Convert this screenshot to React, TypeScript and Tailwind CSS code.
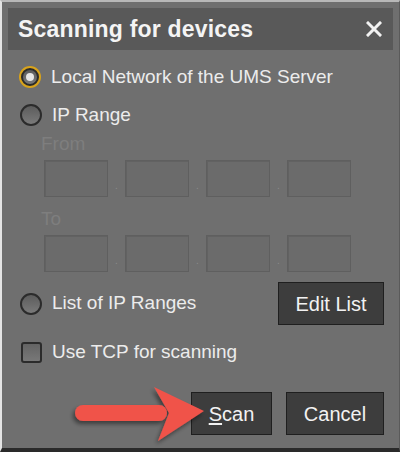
import React from 'react';

function Radio({ checked }: { checked?: boolean }) {
  return (
    <span
      className={`flex h-[22px] w-[22px] shrink-0 items-center justify-center rounded-full ${
        checked ? 'bg-[#d9a31a] p-[2px]' : 'p-0'
      }`}
    >
      <span className="flex h-full w-full items-center justify-center rounded-full border-2 border-[#2b2b2b] bg-gradient-to-b from-[#5c5c5c] to-[#7a7a7a]">
        {checked && <span className="h-[8px] w-[8px] rounded-full bg-[#e6e6e6]" />}
      </span>
    </span>
  );
}

function IpRow() {
  return (
    <div className="flex items-end">
      {[0, 1, 2, 3].map((i) => (
        <React.Fragment key={i}>
          {i > 0 && <span className="w-[17px] pb-[6px] text-center text-[10px] leading-none text-[#8a8a8a]">.</span>}
          <div className="h-[37px] w-[64px] border border-[#5f5f5f] bg-[#6b6b6b] shadow-[inset_1px_1px_0_#626262]" />
        </React.Fragment>
      ))}
    </div>
  );
}

function Btn({ children, w }: { children: React.ReactNode; w: string }) {
  return (
    <button className={`${w} h-[43px] border border-[#1f1f1f] bg-[#3d3d3d] text-[20px] text-[#f2f2f2]`}>
      {children}
    </button>
  );
}

export default function App() {
  return (
    <div
      className="relative h-[452px] w-[400px] overflow-hidden border-t-2 border-l-2 border-b-4 border-r border-t-[#b8b8b8] border-l-[#e4e4e4] border-b-[#2a2a2a] border-r-[#5a5a5a] bg-[#6f6f6f]"
      style={{ fontFamily: '"Liberation Sans", Arial, sans-serif' }}
    >
      <div className="mx-[6px] mt-[6px] flex h-[42px] items-center justify-between bg-[#595959] pl-[10px] pr-[11px]">
        <span className="text-[23px] font-bold tracking-[0.2px] text-[#f4f4f4]">Scanning for devices</span>
        <svg width="16" height="16" viewBox="0 0 16 16">
          <path d="M2 2 L14 14 M14 2 L2 14" stroke="#f2f2f2" strokeWidth="3" strokeLinecap="square" />
        </svg>
      </div>

      <div className="flex flex-col pl-[17px] pr-[15px] text-[19px] text-[#ececec]">
        <label className="mt-[16px] flex h-[22px] items-center gap-[10px]">
          <Radio checked />
          <span>Local Network of the UMS Server</span>
        </label>
        <label className="mt-[16px] flex h-[22px] items-center gap-[10px] pl-[1px]">
          <Radio />
          <span>IP Range</span>
        </label>

        <div className="mt-[8px] flex flex-col pl-[22px] text-[#7e7e7e]">
          <span className="leading-[20px]">From</span>
          <div className="mt-[6px] pl-[3px]">
            <IpRow />
          </div>
          <span className="mt-[12px] leading-[20px]">To</span>
          <div className="mt-[6px] pl-[3px]">
            <IpRow />
          </div>
        </div>

        <div className="mt-[10px] flex items-center justify-between">
          <label className="flex h-[22px] items-center gap-[10px] pl-[1px]">
            <Radio />
            <span>List of IP Ranges</span>
          </label>
          <Btn w="w-[106px]">Edit List</Btn>
        </div>

        <label className="mt-[16px] flex h-[22px] items-center gap-[10px] pl-[2px]">
          <span className="h-[21px] w-[21px] rounded-[3px] border-2 border-[#2b2b2b] bg-gradient-to-b from-[#646464] to-[#787878]" />
          <span>Use TCP for scanning</span>
        </label>

        <div className="mt-[29px] flex justify-end gap-[14px]">
          <Btn w="w-[81px]">
            <span className="underline underline-offset-2">S</span>can
          </Btn>
          <Btn w="w-[98px]">Cancel</Btn>
        </div>
      </div>

      <svg className="absolute left-0 top-0" width="400" height="452" viewBox="0 0 400 452">
        <defs>
          <filter id="sh" x="-20%" y="-20%" width="140%" height="160%">
            <feDropShadow dx="-2" dy="3" stdDeviation="2" floodColor="#000" floodOpacity="0.45" />
          </filter>
        </defs>
        <g filter="url(#sh)" fill="#f0524a">
          <rect x="73" y="403" width="92" height="16" rx="8" />
          <path d="M152 385 L202 409 L156 439 L167 411 Z" />
        </g>
      </svg>
    </div>
  );
}
